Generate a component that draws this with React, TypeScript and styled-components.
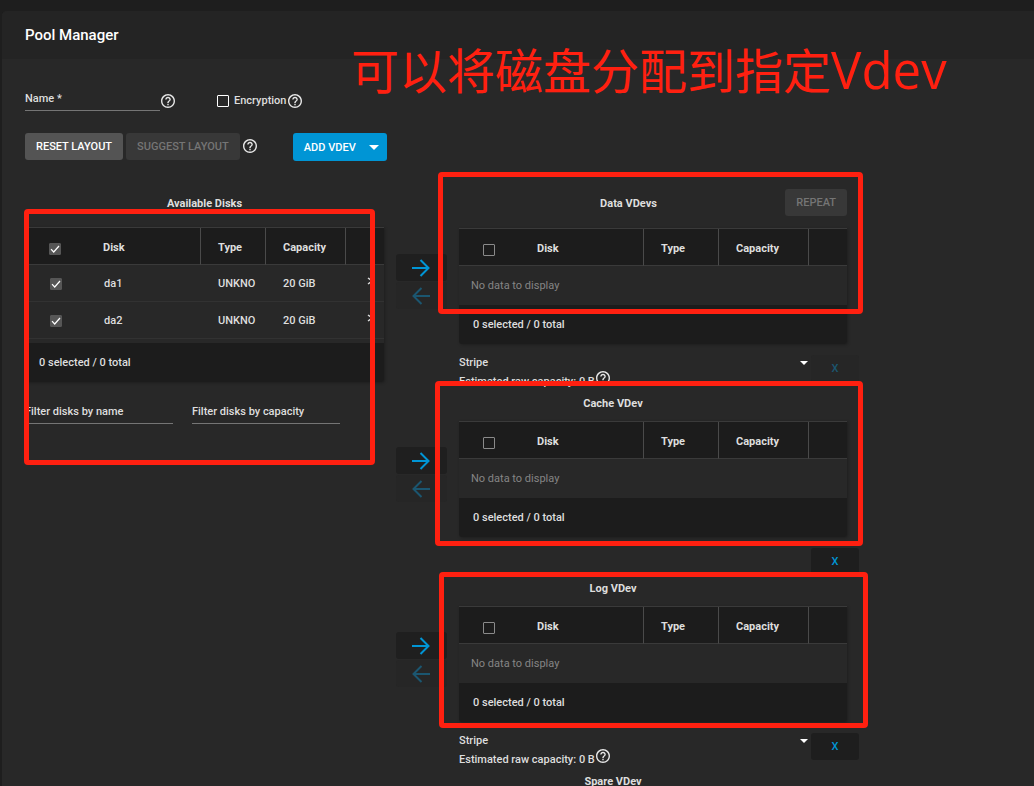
import React from "react";
import styled, { createGlobalStyle, css } from "styled-components";

const red = "#ff2010";
const blue = "#0095d5";
const body = "#282828";
const dark = "#1c1c1c";

const GlobalStyle = createGlobalStyle`
  * { box-sizing: border-box; }
  html { scrollbar-width: none; }
  html, body { margin: 0; background: #1e1e1e; }
  body {
    font-family: Roboto, "Liberation Sans", sans-serif;
    font-size: 11px;
    font-weight: 500;
    line-height: 16px;
    color: #dedede;
  }
  button, input, select { font: inherit; color: inherit; }
`;

const Page = styled.div`
  padding: 11px 0 0 2px;
`;

const Card = styled.main`
  position: relative;
  min-height: calc(100vh - 11px);
  background: ${body};
  border-radius: 5px 0 0 0;
`;

const CardHeader = styled.header`
  display: flex;
  align-items: center;
  height: 48px;
  padding: 0 23px;
  background: #242424;
  border-radius: 5px 0 0 0;
`;

const PageTitle = styled.h1`
  margin: 0;
  font-size: 15px;
  line-height: 20px;
  font-weight: 500;
  color: #fff;
`;

const Caption = styled.p`
  position: absolute;
  top: 22px;
  left: 349px;
  margin: 0;
  font-family: "Open Sans", "Noto Sans CJK SC", sans-serif;
  font-size: 48px;
  font-weight: 400;
  line-height: 72px;
  white-space: nowrap;
  color: ${red};
`;

const CaptionLatin = styled.span`
  font-size: 51px;
`;

const CardBody = styled.div`
  padding: 31px 0 0 23px;
`;

const FormRow = styled.div`
  display: flex;
  align-items: center;
  gap: 1px;
`;

const Field = styled.label<{ $width: number }>`
  position: relative;
  display: block;
  width: ${(p) => p.$width}px;
  height: 21px;
  padding-top: 1px;
`;

const FieldInput = styled.input`
  position: absolute;
  inset: 0;
  width: 100%;
  padding: 0;
  background: transparent;
  border: 0;
  border-bottom: 1px solid #757575;
  outline: none;
`;

const HelpButton = styled.button`
  display: flex;
  padding: 0;
  border: 0;
  background: none;
  color: #e6e6e6;
`;

const CheckLabel = styled.label`
  display: flex;
  align-items: center;
  gap: 5px;
  margin: 0 1px 0 41px;
`;

const CheckBox = styled.input<{ $bright?: boolean }>`
  appearance: none;
  display: block;
  width: 12px;
  height: 12px;
  margin: 0;
  border: 1px solid ${(p) => (p.$bright ? "#fff" : "#8a8a8a")};
  border-radius: 1px;
  &:checked {
    border-color: #565656;
    background: #565656 url("data:image/svg+xml,%3Csvg xmlns='http://www.w3.org/2000/svg' viewBox='0 0 10 10'%3E%3Cpath d='M1 5.2L3.7 8L9 2' fill='none' stroke='white' stroke-width='1.2'/%3E%3C/svg%3E") center / 10px 10px no-repeat;
  }
`;

const Toolbar = styled.div`
  display: flex;
  align-items: flex-start;
  gap: 3px;
  margin-top: 22px;
`;

const Button = styled.button<{ $tone?: "primary" }>`
  display: flex;
  align-items: center;
  justify-content: center;
  gap: 13px;
  height: 27px;
  padding: 0 11px;
  border: 0;
  border-radius: 3px;
  background: #545454;
  color: #fff;
  text-transform: uppercase;
  white-space: nowrap;
  &:disabled { background: #383838; color: #757575; }
  ${(p) =>
    p.$tone === "primary" &&
    css`
      height: 28px;
      margin-left: 33px;
      padding: 1px 8px 0 11px;
      background: ${blue};
    `}
`;

const ToolbarHelp = styled.div`
  padding: 6px 0 0;
`;

const Columns = styled.div`
  display: grid;
  grid-template-columns: minmax(0, 359fr) minmax(0, 463fr) minmax(0, 163fr);
  align-items: start;
  gap: 12px;
  margin-top: 28px;
`;

const Panel = styled.section`
  position: relative;
`;

const TitleRow = styled.div<{ $height: number; $gap: number; $aside?: number }>`
  position: relative;
  display: flex;
  align-items: center;
  justify-content: center;
  height: ${(p) => p.$height}px;
  margin-bottom: ${(p) => p.$gap}px;
  padding: 2px ${(p) => p.$aside ?? 0}px 0 0;
`;

const Title = styled.h2`
  margin: 0;
  font-size: 11px;
  line-height: 16px;
  font-weight: 700;
`;

const RepeatSlot = styled.div`
  position: absolute;
  top: 0;
  right: 0;
`;

const TableBox = styled.div`
  border-radius: 0 0 3px 3px;
  box-shadow: 1px 1px 3px rgba(0, 0, 0, 0.25);
`;

const Grid = styled.table`
  width: 100%;
  table-layout: fixed;
  border-collapse: separate;
  border-spacing: 0;
  border-top: 1px solid #3a3a3a;
`;

const Head = styled.th<{ $width?: number; $ruled?: boolean }>`
  width: ${(p) => (p.$width ? `${p.$width}px` : "auto")};
  height: 37px;
  padding: 4px 0 0 ${(p) => (p.$ruled ? 17 : 14)}px;
  text-align: left;
  font-weight: 700;
  background: ${dark};
  border-bottom: 1px solid #3a3a3a;
  border-left: ${(p) => (p.$ruled ? "1px solid #4a4a4a" : "0")};
`;

const Cell = styled.td<{ $ruled?: boolean }>`
  height: 37px;
  padding: 1px 0 0 ${(p) => (p.$ruled ? 18 : 15)}px;
  white-space: nowrap;
  border-bottom: 1px solid #323232;
`;

const TickSlot = styled.div`
  padding: 1px 0 0 10px;
`;

const MoreCell = styled.td`
  padding: 0 0 2px 22px;
  border-bottom: 1px solid #323232;
`;

const EmptyCell = styled.td`
  height: 39px;
  padding: 0 12px;
  font-weight: 400;
  color: #858585;
`;

const TableFooter = styled.div<{ $gap?: boolean }>`
  margin-top: ${(p) => (p.$gap ? 4 : 0)}px;
  padding: 12px 14px 11px;
  background: ${dark};
  border-radius: 0 0 3px 3px;
`;

const Filters = styled.div`
  display: flex;
  gap: 19px;
  margin-top: 21px;
`;

const VdevSection = styled.div`
  display: grid;
  grid-template-columns: 51px minmax(0, 1fr);
  column-gap: 12px;
`;

const Arrows = styled.div<{ $top: number }>`
  display: flex;
  flex-direction: column;
  gap: 1px;
  padding-top: ${(p) => p.$top}px;
`;

const ArrowButton = styled.button`
  display: flex;
  align-items: center;
  justify-content: center;
  height: 27px;
  padding: 0 2px 0 0;
  border: 0;
  border-radius: 3px;
  background: #1f1f1f;
  color: ${blue};
  &:disabled { background: #262626; color: #1b5670; }
`;

const VdevPanel = styled.section`
  position: relative;
  padding-right: 12px;
`;

const Options = styled.div<{ $tall?: boolean }>`
  display: flex;
  justify-content: flex-end;
  height: ${(p) => (p.$tall ? 35 : 27)}px;
  margin: 11px -12px 5px 0;
`;

const Layout = styled.div`
  flex: 1;
  min-width: 0;
`;

const SelectBox = styled.div`
  display: flex;
  align-items: center;
  padding-right: 3px;
`;

const LayoutSelect = styled.select`
  flex: 1;
  appearance: none;
  height: 16px;
  padding: 0;
  border: 0;
  background: transparent;
`;

const Estimate = styled.div`
  display: flex;
  align-items: center;
  gap: 1px;
  height: 16px;
  margin-top: 3px;
`;

const EstimateHelp = styled.span`
  padding-bottom: 8px;
`;

const RemoveButton = styled.button`
  width: 48px;
  height: 27px;
  padding: 0;
  border: 0;
  border-radius: 3px;
  background: #1e1e1e;
  color: ${blue};
  &:disabled { background: #262626; color: #1b5670; }
`;

const Marker = styled.div<{ $inset: string }>`
  position: absolute;
  z-index: 2;
  inset: ${(p) => p.$inset};
  border: 5px solid ${red};
  border-radius: 4px;
  pointer-events: none;
`;

const Help = () => (
  <HelpButton type="button" aria-label="Help">
    <svg width="14" height="14" viewBox="2 2 20 20" fill="currentColor">
      <path d="M11 18h2v-2h-2v2zm1-16C6.48 2 2 6.48 2 12s4.480 10 10 10 10-4.480 10-10S17.520 2 12 2zm0 18c-4.410 0-8-3.590-8-8s3.590-8 8-8 8 3.590 8 8-3.590 8-8 8zm0-14c-2.210 0-4 1.790-4 4h2c0-1.100.9-2 2-2s2 .9 2 2c0 2-3 1.750-3 5h2c0-2.250 3-2.500 3-5 0-2.210-1.790-4-4-4z" />
    </svg>
  </HelpButton>
);

const Caret = ({ size = 8 }: { size?: number }) => (
  <svg width={size} height={size / 2} viewBox="0 0 10 5" fill="#fff">
    <path d="M0 0h10L5 5z" />
  </svg>
);

const Arrow = ({ left }: { left?: boolean }) => (
  <svg width="18" height="18" viewBox="0 0 18 18" fill="none" stroke="currentColor" strokeWidth="2">
    <path d={left ? "M18 9H1.500M9.500 1L1.500 9L9.500 17" : "M0 9H16.500M8.500 1L16.500 9L8.500 17"} />
  </svg>
);

type Disk = { name: string; type: string; capacity: string };

const disks: Disk[] = [
  { name: "da1", type: "UNKNO", capacity: "20 GiB" },
  { name: "da2", type: "UNKNO", capacity: "20 GiB" },
];

const DiskTable = ({ rows, type, capacity }: { rows: Disk[]; type: number; capacity: number }) => (
  <TableBox>
    <Grid>
      <thead>
        <tr>
          <Head $width={64}>
            <TickSlot>
              <CheckBox type="checkbox" aria-label="Select all disks" defaultChecked={rows.length > 0} />
            </TickSlot>
          </Head>
          <Head>Disk</Head>
          <Head $width={type} $ruled>Type</Head>
          <Head $width={capacity} $ruled>Capacity</Head>
          <Head $width={39} $ruled />
        </tr>
      </thead>
      <tbody>
        {rows.map((d) => (
          <tr key={d.name}>
            <Cell>
              <TickSlot>
                <CheckBox type="checkbox" aria-label={`Select ${d.name}`} defaultChecked />
              </TickSlot>
            </Cell>
            <Cell>{d.name}</Cell>
            <Cell $ruled>{d.type}</Cell>
            <Cell $ruled>{d.capacity}</Cell>
            <MoreCell>
              <svg width="8" height="8" viewBox="0 0 8 8" fill="none" stroke="#dedede" strokeWidth="1.500">
                <path d="M1 1L4 3L7 1M1 7L4 5L7 7" />
              </svg>
            </MoreCell>
          </tr>
        ))}
        {rows.length === 0 && (
          <tr>
            <EmptyCell colSpan={5}>No data to display</EmptyCell>
          </tr>
        )}
      </tbody>
    </Grid>
    <TableFooter $gap={rows.length > 0}>0 selected / 0 total</TableFooter>
  </TableBox>
);

type VdevProps = {
  title: string;
  repeat?: boolean;
  layout?: boolean;
  locked?: boolean;
  marker: string;
};

const Vdev = ({ title, repeat, layout, locked, marker }: VdevProps) => (
  <VdevSection>
    <Arrows $top={repeat ? 65 : 52}>
      <ArrowButton type="button" aria-label={`Add to ${title}`}><Arrow /></ArrowButton>
      <ArrowButton type="button" aria-label={`Remove from ${title}`} disabled><Arrow left /></ArrowButton>
    </Arrows>
    <VdevPanel>
      <Marker $inset={marker} />
      <TitleRow $height={repeat ? 27 : 16} $gap={repeat ? 12 : 10} $aside={repeat ? 49 : 80}>
        <Title>{title}</Title>
        {repeat && (
          <RepeatSlot><Button type="button" disabled>Repeat</Button></RepeatSlot>
        )}
      </TitleRow>
      <DiskTable rows={[]} type={75} capacity={90} />
      <Options $tall={layout}>
        {layout && (
          <Layout>
            <SelectBox>
              <LayoutSelect aria-label={`${title} layout`}>
                <option>Stripe</option>
              </LayoutSelect>
              <Caret />
            </SelectBox>
            <Estimate>
              Estimated raw capacity: 0 B
              <EstimateHelp><Help /></EstimateHelp>
            </Estimate>
          </Layout>
        )}
        <RemoveButton type="button" disabled={locked}>X</RemoveButton>
      </Options>
    </VdevPanel>
  </VdevSection>
);

export default function App() {
  return (
    <Page>
      <GlobalStyle />
      <Card>
        <CardHeader>
          <PageTitle>Pool Manager</PageTitle>
        </CardHeader>
        <Caption>
          可以将磁盘分配到指定<CaptionLatin>Vdev</CaptionLatin>
        </Caption>
        <CardBody>
          <FormRow>
            <Field $width={135}>
              Name *
              <FieldInput type="text" required />
            </Field>
            <Help />
            <CheckLabel>
              <CheckBox type="checkbox" $bright />
              Encryption
            </CheckLabel>
            <Help />
          </FormRow>
          <Toolbar>
            <Button type="button">Reset layout</Button>
            <Button type="button" disabled>Suggest layout</Button>
            <ToolbarHelp><Help /></ToolbarHelp>
            <Button type="button" $tone="primary">
              Add vdev
              <Caret size={10} />
            </Button>
          </Toolbar>
          <Columns>
            <Panel>
              <Marker $inset="20px 9px -41px -1px" />
              <TitleRow $height={27} $gap={11}><Title>Available Disks</Title></TitleRow>
              <DiskTable rows={disks} type={65} capacity={80} />
              <Filters>
                <Field $width={148}>
                  Filter disks by name
                  <FieldInput type="text" />
                </Field>
                <Field $width={148}>
                  Filter disks by capacity
                  <FieldInput type="text" />
                </Field>
              </Filters>
            </Panel>
            <div>
              <Vdev title="Data VDevs" repeat layout locked marker="-17px -4px 81px -21px" />
              <Vdev title="Cache VDev" marker="-14px -4px 34px -24px" />
              <Vdev title="Log VDev" layout marker="-8px -9px 45px -20px" />
              <VdevSection>
                <span />
                <VdevPanel>
                  <TitleRow $height={16} $gap={0} $aside={80}><Title>Spare VDev</Title></TitleRow>
                </VdevPanel>
              </VdevSection>
            </div>
          </Columns>
        </CardBody>
      </Card>
    </Page>
  );
}
